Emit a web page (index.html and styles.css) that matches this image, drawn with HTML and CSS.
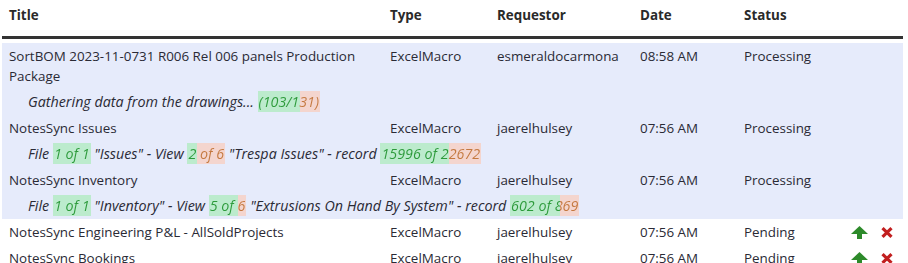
FILE: index.html
```html
<!DOCTYPE html>
<html>
<head>
<meta charset="utf-8">
<link rel="stylesheet" href="styles.css">
</head>
<body>
<table class="jobs">
  <colgroup>
    <col class="c-title"><col class="c-type"><col class="c-req"><col class="c-date"><col class="c-status"><col class="c-act">
  </colgroup>
  <thead>
    <tr><th>Title</th><th>Type</th><th>Requestor</th><th>Date</th><th>Status</th><th></th></tr>
  </thead>
  <tbody>
    <tr class="gap"><td colspan="6"></td></tr>
    <tr class="active"><td>SortBOM 2023-11-0731 R006 Rel 006 panels Production Package</td><td>ExcelMacro</td><td>esmeraldocarmona</td><td>08:58 AM</td><td>Processing</td><td></td></tr>
    <tr class="active prog"><td colspan="6">Gathering data from the drawings... <span class="bar" style="--p:67%"><span class="bt">(103/131)</span></span></td></tr>
    <tr class="active"><td>NotesSync Issues</td><td>ExcelMacro</td><td>jaerelhulsey</td><td>07:56 AM</td><td>Processing</td><td></td></tr>
    <tr class="active prog"><td colspan="6">File <span class="bar" style="--p:100%"><span class="bt">1 of 1</span></span> "Issues" - View <span class="bar" style="--p:27%"><span class="bt">2 of 6</span></span> "Trespa Issues" - record <span class="bar" style="--p:68%"><span class="bt">15996 of 22672</span></span></td></tr>
    <tr class="active"><td>NotesSync Inventory</td><td>ExcelMacro</td><td>jaerelhulsey</td><td>07:56 AM</td><td>Processing</td><td></td></tr>
    <tr class="active prog"><td colspan="6">File <span class="bar" style="--p:100%"><span class="bt">1 of 1</span></span> "Inventory" - View <span class="bar" style="--p:78%"><span class="bt">5 of 6</span></span> "Extrusions On Hand By System" - record <span class="bar" style="--p:73%"><span class="bt">602 of 869</span></span></td></tr>
    <tr><td>NotesSync Engineering P&amp;L - AllSoldProjects</td><td>ExcelMacro</td><td>jaerelhulsey</td><td>07:56 AM</td><td>Pending</td><td class="acts"><span class="ico up"><svg width="17" height="13" viewBox="0 0 17 13"><polygon points="8.5,0 17,8 11,8 11,13 6,13 6,8 0,8" fill="#2d8a2a"/></svg></span><span class="ico del"><svg width="12" height="11" viewBox="0 0 12 11"><path d="M1.5 1.2 L10.5 9.8 M10.5 1.2 L1.5 9.8" stroke="#c21f1f" stroke-width="3.2"/></svg></span></td></tr>
    <tr><td>NotesSync Bookings</td><td>ExcelMacro</td><td>jaerelhulsey</td><td>07:56 AM</td><td>Pending</td><td class="acts"><span class="ico up"><svg width="17" height="13" viewBox="0 0 17 13"><polygon points="8.5,0 17,8 11,8 11,13 6,13 6,8 0,8" fill="#2d8a2a"/></svg></span><span class="ico del"><svg width="12" height="11" viewBox="0 0 12 11"><path d="M1.5 1.2 L10.5 9.8 M10.5 1.2 L1.5 9.8" stroke="#c21f1f" stroke-width="3.2"/></svg></span></td></tr>
  </tbody>
</table>
</body>
</html>
```

FILE: styles.css
```css
html, body {
  margin: 0;
  padding: 0;
  background: #fff;
}
body {
  font-family: "Open Sans", "Noto Sans", sans-serif;
  font-size: 13.4px;
  color: #2a2a35;
  overflow: hidden;
}
.jobs {
  margin-left: 2px;
  width: 901px;
  border-collapse: separate;
  border-spacing: 0;
  table-layout: fixed;
}
.c-title { width: 381px; }
.c-type { width: 107px; }
.c-req { width: 143px; }
.c-date { width: 104px; }
.c-status { width: 103px; }
.c-act { width: 63px; }
.jobs th {
  text-align: left;
  font-weight: 700;
  color: #2a2a2a;
  line-height: 20px;
  padding: 5px 7px 11px;
  border-bottom: 3px solid #333;
}
.jobs td {
  line-height: 20px;
  padding: 3px 7px;
  vertical-align: top;
}
.jobs tr.gap td {
  padding: 0;
  height: 4px;
  line-height: 0;
}
.jobs tr.active td {
  background: #e6ebfb;
}
.jobs tr.prog td {
  font-style: italic;
  font-size: 14.3px;
  padding-left: 26px;
}
.bar {
  background: linear-gradient(to right, #bcebcd var(--p), #f4d5ce var(--p));
  padding: 1px 1px;
}
.bt {
  background: linear-gradient(to right, #2c9a3a var(--p), #c4783f var(--p));
  -webkit-background-clip: text;
  background-clip: text;
  color: transparent;
}
.acts {
  white-space: nowrap;
}
.ico {
  display: inline-block;
  vertical-align: middle;
  line-height: 0;
}
.ico.up { margin-left: 4px; margin-top: -2px; }
.ico.del { margin-left: 13px; margin-top: -2px; }
```
